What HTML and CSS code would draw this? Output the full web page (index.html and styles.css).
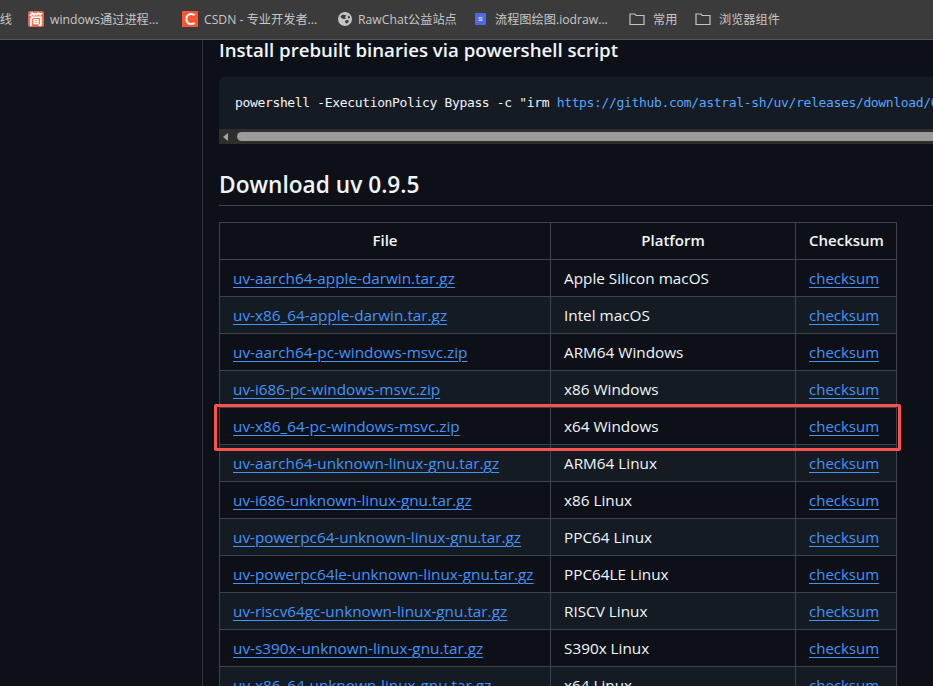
FILE: index.html

```html
<!DOCTYPE HTML><html>
<head>
  <meta name="viewport" content="width=device-width, initial-scale=1">
  <title>Download uv 0.9.5</title>
  <link rel="stylesheet" href="styles.css">
</head>
<body>
  <div class="bookmarks">
    <span class="bm bm-cut">线</span>
    <span class="bm bm-a">
      <span class="tile">简</span>
      <span>windows通过进程...</span>
    </span>
    <span class="bm bm-b">
      <svg class="ico" viewBox="0 0 16 16"><rect width="16" height="16" fill="#fc5531"/><path d="M12.5 4.2C11.6 3.3 10.5 2.9 9.3 2.9 6.4 2.9 4.3 5 4.3 8s2.100 5.100 5 5.100c1.200 0 2.300-.4 3.200-1.300" fill="none" stroke="#fff" stroke-width="2"/></svg>
      <span>CSDN - 专业开发者...</span>
    </span>
    <span class="bm bm-c">
      <svg class="ico ico-globe" viewBox="0 0 14 14"><circle cx="7" cy="7" r="7" fill="#c4c4c4"/><path d="M2.500 4.500C3.500 3 5 2.500 6.500 3L8.500 3.500 7 5 8 6.500 5.500 7 3.500 6zM11.500 3.500L9.500 5 10.500 6.500 12 6zM7 8.500L10 8 11 9.500 9 11.500 7.500 11z" fill="#3b3b3b"/></svg>
      <span>RawChat公益站点</span>
    </span>
    <span class="bm bm-d">
      <svg class="ico ico-doc" viewBox="0 0 11 12"><rect width="11" height="12" rx="1" fill="#4f6ae8"/><path d="M7.500 4.500H4v1.500h3v1.500H3.500" fill="none" stroke="#c9d3fa" stroke-width="1"/></svg>
      <span>流程图绘图.iodraw...</span>
    </span>
    <span class="bm bm-e">
      <svg class="ico" viewBox="0 0 16 16"><path d="M1 3h4.800l1.400 1.500H15V13.500H1z" fill="none" stroke="#c4c4c4" stroke-width="1.200"/></svg>
      <span>常用</span>
    </span>
    <span class="bm bm-f">
      <svg class="ico" viewBox="0 0 16 16"><path d="M1 3h4.800l1.400 1.500H15V13.500H1z" fill="none" stroke="#c4c4c4" stroke-width="1.200"/></svg>
      <span>浏览器组件</span>
    </span>
  </div>

  <div class="page">
    <div class="side"></div>
    <div class="content">
      <h3>Install prebuilt binaries via powershell script</h3>
      <div class="code-box">
        <div class="code">powershell -ExecutionPolicy Bypass -c "irm <span class="code-url">https://github.com/astral-sh/uv/releases/download/0.9.5/uv-installer.ps1</span> | iex"</div>
        <div class="scroll">
          <span class="scroll-arrow"></span>
          <span class="scroll-thumb"></span>
        </div>
      </div>

      <h2>Download uv 0.9.5</h2>

      <table class="files">
        <thead>
          <tr><th class="col-file">File</th><th class="col-platform">Platform</th><th class="col-sum">Checksum</th></tr>
        </thead>
        <tbody>
          <tr><td><a href="#">uv-aarch64-apple-darwin.tar.gz</a></td><td>Apple Silicon macOS</td><td><a href="#">checksum</a></td></tr>
          <tr><td><a href="#">uv-x86_64-apple-darwin.tar.gz</a></td><td>Intel macOS</td><td><a href="#">checksum</a></td></tr>
          <tr><td><a href="#">uv-aarch64-pc-windows-msvc.zip</a></td><td>ARM64 Windows</td><td><a href="#">checksum</a></td></tr>
          <tr><td><a href="#">uv-i686-pc-windows-msvc.zip</a></td><td>x86 Windows</td><td><a href="#">checksum</a></td></tr>
          <tr><td><a href="#">uv-x86_64-pc-windows-msvc.zip</a></td><td>x64 Windows</td><td><a href="#">checksum</a></td></tr>
          <tr><td><a href="#">uv-aarch64-unknown-linux-gnu.tar.gz</a></td><td>ARM64 Linux</td><td><a href="#">checksum</a></td></tr>
          <tr><td><a href="#">uv-i686-unknown-linux-gnu.tar.gz</a></td><td>x86 Linux</td><td><a href="#">checksum</a></td></tr>
          <tr><td><a href="#">uv-powerpc64-unknown-linux-gnu.tar.gz</a></td><td>PPC64 Linux</td><td><a href="#">checksum</a></td></tr>
          <tr><td><a href="#">uv-powerpc64le-unknown-linux-gnu.tar.gz</a></td><td>PPC64LE Linux</td><td><a href="#">checksum</a></td></tr>
          <tr><td><a href="#">uv-riscv64gc-unknown-linux-gnu.tar.gz</a></td><td>RISCV Linux</td><td><a href="#">checksum</a></td></tr>
          <tr><td><a href="#">uv-s390x-unknown-linux-gnu.tar.gz</a></td><td>S390x Linux</td><td><a href="#">checksum</a></td></tr>
          <tr><td><a href="#">uv-x86_64-unknown-linux-gnu.tar.gz</a></td><td>x64 Linux</td><td><a href="#">checksum</a></td></tr>
        </tbody>
      </table>
    </div>
  </div>

  <div class="mark"></div>
</body>
</html>
```

FILE: styles.css

```css
html {background: #0d1117;}
body {margin: 0; height: 686px; overflow: hidden; font-family: "Open Sans", "Noto Sans CJK SC", sans-serif; color: #f0f6fc; position: relative;}

/* bookmarks bar */
.bookmarks {display: flex; align-items: center; height: 40px; padding-bottom: 1px; box-sizing: border-box; background: #3b3b3b; border-bottom: 1px solid #565656; font-size: 12.200px; color: #c7c7c7; white-space: nowrap; overflow: hidden;}
.bm {display: flex; align-items: center; gap: 6px; flex-shrink: 0;}
.ico {width: 16px; height: 16px; flex-shrink: 0;}
.ico-globe {width: 14px; height: 14px; margin-left: 1px;}
.ico-doc {width: 11px; height: 12px;}
.tile {width: 16px; height: 16px; line-height: 16px; flex-shrink: 0; border-radius: 2px; background: #e8644a; color: #fff; font-size: 14px; font-weight: 700; text-align: center;}
.bm-cut {width: 12px; justify-content: flex-end; margin-right: 16px;}
.bm-a {width: 154px;}
.bm-b {width: 155px;}
.bm-c {width: 138px;}
.bm-d {width: 154px; gap: 9px;}
.bm-e {width: 66px; gap: 8px;}
.bm-f {gap: 8px;}

/* page */
.page {display: flex;}
.side {width: 202px; flex-shrink: 0; border-right: 1px solid #30363d; height: 646px;}
.content {width: 780px; flex-shrink: 0; padding-left: 16px;}
h3 {margin: 0; height: 37px; font-size: 18.650px; font-weight: 600; line-height: 20px;}
.code-box {background: #151b23; border-radius: 6px 0 0 0; height: 67px; overflow: hidden;}
.code {height: 52px; padding-left: 16px; line-height: 51px; font-family: "DejaVu Sans Mono", monospace; font-size: 13px; letter-spacing: -0.346px; white-space: nowrap;}
.code-url {color: #58a6ff;}
.scroll {display: flex; align-items: center; height: 15px; background: #2e2e2e;}
.scroll-arrow {width: 0; height: 0; margin-left: 4px; border: 4px solid transparent; border-left: 0; border-right: 5px solid #a3a3a3;}
.scroll-thumb {flex: 1; height: 9px; margin-left: 9px; background: #9b9b9b; border-radius: 5px 0 0 5px;}
h2 {margin: 24px 0 16px; height: 37px; border-bottom: 1px solid #3d444d; font-size: 22.700px; font-weight: 600; line-height: 34px;}

/* release table */
.files {border-collapse: collapse; font-size: 15.300px; table-layout: fixed; width: 677px;}
.files th, .files td {height: 36px; padding: 0 13px; border: 1px solid #3d444d; box-sizing: content-box;}
.files th {height: 34px; padding-bottom: 2px; font-size: 15px; font-weight: 600; text-align: center;}
.col-file {width: 304px;}
.col-platform {width: 218px;}
.col-sum {width: 74px;}
.files tbody tr:nth-child(even) {background: #151b23;}
.files a {color: #4493f8; text-decoration: underline; text-underline-offset: 3px;}
.files td:last-child a {font-size: 15px;}

/* red highlight drawn over the table */
.mark {position: absolute; left: 214px; top: 404px; width: 681px; height: 41px; border: 3px solid #fc5350; border-radius: 2px;}
```
